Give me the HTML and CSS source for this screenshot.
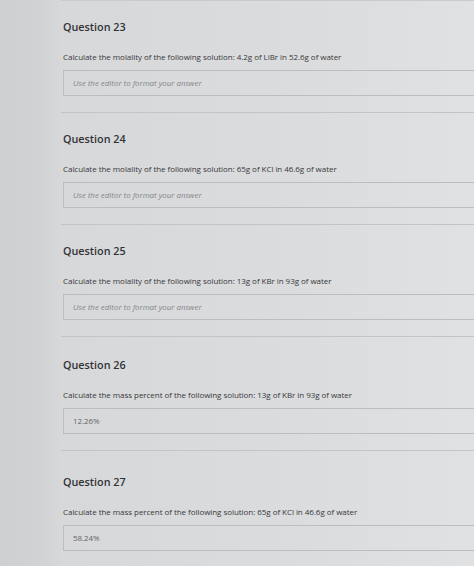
FILE: index.html
```html
<!DOCTYPE html>
<html>
<head>
<meta charset="utf-8">
<link rel="stylesheet" href="styles.css">
</head>
<body>
<div class="page">
  <aside class="side"></aside>
  <main class="content">
    <div class="topline"></div>
    <section class="q">
      <h2 class="q-title">Question 23</h2>
      <p class="q-text">Calculate the molality of the following solution: 4.2g of LiBr in 52.6g of water</p>
      <div class="answer placeholder">Use the editor to format your answer</div>
    </section>
    <section class="q">
      <h2 class="q-title">Question 24</h2>
      <p class="q-text">Calculate the molality of the following solution: 65g of KCl in 46.6g of water</p>
      <div class="answer placeholder">Use the editor to format your answer</div>
    </section>
    <section class="q">
      <h2 class="q-title">Question 25</h2>
      <p class="q-text">Calculate the molality of the following solution: 13g of KBr in 93g of water</p>
      <div class="answer placeholder">Use the editor to format your answer</div>
    </section>
    <section class="q q26">
      <h2 class="q-title">Question 26</h2>
      <p class="q-text">Calculate the mass percent of the following solution: 13g of KBr in 93g of water</p>
      <div class="answer">12.26%</div>
    </section>
    <section class="q last">
      <h2 class="q-title">Question 27</h2>
      <p class="q-text">Calculate the mass percent of the following solution: 65g of KCl in 46.6g of water</p>
      <div class="answer">58.24%</div>
    </section>
  </main>
</div>
</body>
</html>
```
FILE: styles.css
```css
html, body {
  margin: 0;
  padding: 0;
  overflow: hidden;
}
body {
  width: 474px;
  height: 566px;
  background: #d6d7d9;
  font-family: "Open Sans", "Noto Sans", sans-serif;
  color: #3a3b3d;
}
.page {
  display: flex;
  height: 566px;
  background: linear-gradient(90deg, #cdcfd1 0px, #d1d3d5 45px, #d7d8da 62px, #dbdcde 300px, #e0e1e2 474px);
}
.side {
  width: 61px;
  flex: none;
}
.content {
  flex: 1;
  margin-right: -12px;
}
.topline {
  height: 0;
  border-bottom: 1px solid #c9cacc;
}
.q {
  padding-top: 19px;
  padding-bottom: 16px;
  border-bottom: 1px solid #c3c4c6;
}
.q.q26 {
  padding-top: 21px;
}
.q.last {
  padding-top: 24px;
  border-bottom: none;
}
.q-title {
  margin: 0 0 0 2px;
  font-size: 10.8px;
  line-height: 14px;
  font-weight: 600;
  color: #323335;
}
.q-text {
  margin: 18px 0 8px 2px;
  font-size: 8px;
  line-height: 10px;
  color: #37383a;
  letter-spacing: -0.05px;
}
.answer {
  height: 26px;
  border: 1px solid #bcbdbf;
  box-sizing: border-box;
  margin-left: 2px;
  padding-left: 9px;
  font-size: 7.9px;
  line-height: 24px;
  color: #646567;
}
.placeholder {
  font-style: italic;
  color: #86878a;
}
```
